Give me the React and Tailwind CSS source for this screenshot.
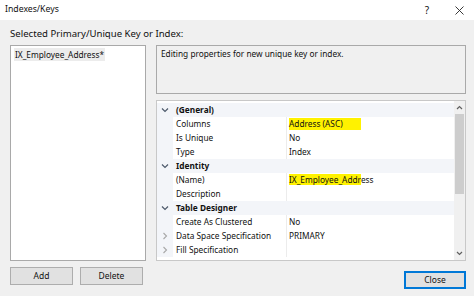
import React from "react";

const rows = [
  { type: "cat", name: "(General)" },
  { name: "Columns", value: "Address (ASC)", hl: "full" },
  { name: "Is Unique", value: "No" },
  { name: "Type", value: "Index" },
  { type: "cat", name: "Identity" },
  { name: "(Name)", value: "IX_Employee_Address", hl: "part" },
  { name: "Description", value: "" },
  { type: "cat", name: "Table Designer" },
  { name: "Create As Clustered", value: "No" },
  { name: "Data Space Specification", value: "PRIMARY", expand: true },
  { name: "Fill Specification", value: "", expand: true },
];

const ChevronDown = ({ className }) => (
  <svg width="8" height="6" viewBox="0 0 8 6" className={className}>
    <path d="M1 1.5 L4 4.5 L7 1.5" fill="none" stroke="currentColor" strokeWidth="1.2" />
  </svg>
);

const ChevronRight = ({ className }) => (
  <svg width="6" height="8" viewBox="0 0 6 8" className={className}>
    <path d="M1.5 1 L4.5 4 L1.5 7" fill="none" stroke="currentColor" strokeWidth="1.1" />
  </svg>
);

const Value = ({ row }) => {
  if (row.hl === "full") return <span className="bg-[#fff200] pr-[18px]">{row.value}</span>;
  if (row.hl === "part")
    return (
      <span>
        <span className="bg-[#fff200]">IX_Employee_Addr</span>ess
      </span>
    );
  return <span>{row.value}</span>;
};

const GridRow = ({ row }) => {
  if (row.type === "cat") {
    return (
      <div className="flex h-[14px] items-center bg-[#f3f5f9]">
        <div className="flex w-[16px] justify-center">
          <ChevronDown className="text-[#4d5a6b]" />
        </div>
        <span className="pl-[3px] font-bold">{row.name}</span>
      </div>
    );
  }
  return (
    <div className="flex h-[14px] items-center">
      <div className="flex h-full w-[16px] items-center justify-center bg-[#f3f5f9]">
        {row.expand && <ChevronRight className="text-[#a8a8a8]" />}
      </div>
      <div className="flex h-full w-[114px] items-center border-r border-[#ececec] pl-[3px]">
        {row.name}
      </div>
      <div className="flex h-full flex-1 items-center pl-[2px]">
        <Value row={row} />
      </div>
    </div>
  );
};

export default function App() {
  return (
    <div
      className="flex h-[298px] w-[474px] flex-col bg-white text-[8.3px] text-[#111]"
      style={{ fontFamily: '"Noto Sans", "Open Sans", sans-serif' }}
    >
      {/* title bar */}
      <div className="flex h-[20px] items-center justify-between pl-[5px] pr-[10px]">
        <span className="text-[8.7px]">Indexes/Keys</span>
        <div className="flex items-center gap-[26px]">
          <span className="text-[10px]">?</span>
          <svg width="9" height="9" viewBox="0 0 9 9">
            <path d="M0.5 0.5 L8.5 8.5 M8.5 0.5 L0.5 8.5" stroke="#222" strokeWidth="0.9" />
          </svg>
        </div>
      </div>

      {/* body */}
      <div className="flex h-[276px] flex-col bg-[#f0f0f0] pl-[10px] pr-[8px] pt-[8px]">
        <div className="h-[17px] text-[9.6px] leading-[12px]">Selected Primary/Unique Key or Index:</div>
        <div className="flex gap-[10px]">
          <div className="h-[216px] w-[136px] border border-[#a9a9a9] bg-white p-[3px]">
            <span className="bg-[#ececec] px-[1px] py-[1px]">IX_Employee_Address*</span>
          </div>
          <div className="flex flex-1 flex-col gap-[6px]">
            <div className="h-[49px] border border-[#a9a9a9] bg-[#f0f0f0] px-[4px] pt-[2px]">
              Editing properties for new unique key or index.
            </div>
            <div className="flex h-[161px] border border-[#c8c8c8] bg-white">
              <div className="flex-1 pt-[2px]">
                {rows.map((r, i) => (
                  <GridRow key={i} row={r} />
                ))}
              </div>
              <div className="flex w-[11px] flex-col items-center bg-[#f0f0f0]">
                <div className="flex h-[13px] items-center">
                  <svg width="7" height="5" viewBox="0 0 7 5">
                    <path d="M1 4 L3.5 1.5 L6 4" fill="none" stroke="#606060" strokeWidth="1.2" />
                  </svg>
                </div>
                <div className="h-[80px] w-[9px] bg-[#cdcdcd]" />
                <div className="flex-1" />
                <div className="flex h-[13px] items-center">
                  <svg width="7" height="5" viewBox="0 0 7 5">
                    <path d="M1 1 L3.5 3.5 L6 1" fill="none" stroke="#606060" strokeWidth="1.2" />
                  </svg>
                </div>
              </div>
            </div>
          </div>
        </div>

        {/* buttons */}
        <div className="mt-[6px] flex items-start">
          <div className="flex gap-[7px]">
            <button className="h-[18px] w-[63px] border border-[#adadad] bg-[#e1e1e1] text-[8.5px]">
              Add
            </button>
            <button className="h-[18px] w-[63px] border border-[#adadad] bg-[#e1e1e1] text-[8.5px]">
              Delete
            </button>
          </div>
          <div className="flex-1" />
          <button className="mt-[4px] h-[18px] w-[62px] border-2 border-[#0078d7] bg-[#e1e1e1] text-[8.5px]">
            Close
          </button>
        </div>
      </div>
    </div>
  );
}
